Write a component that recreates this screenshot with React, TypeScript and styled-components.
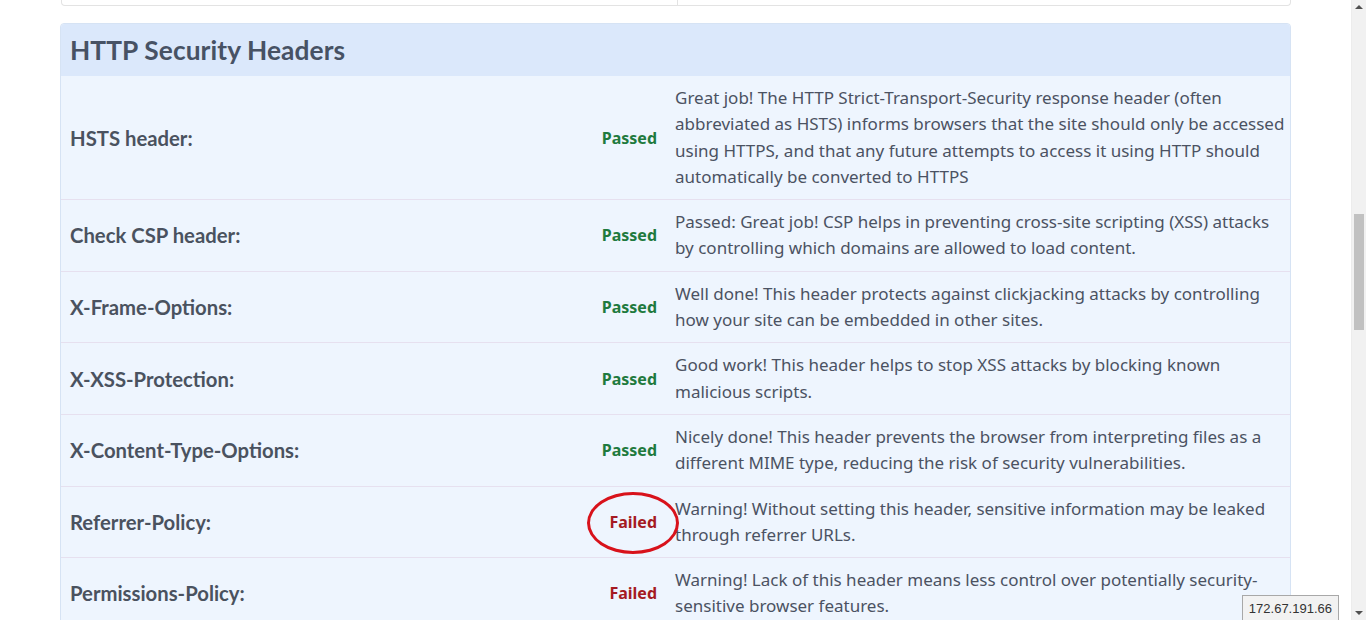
import styled, { createGlobalStyle } from 'styled-components'

const GlobalStyle = createGlobalStyle`
  html, body {
    margin: 0;
    padding: 0;
    background: #ffffff;
  }
  body {
    font-family: "Noto Sans", "Open Sans", sans-serif;
    color: #4a5160;
  }
`;

const Screen = styled.div`
  height: 100vh;
  display: flex;
  overflow: hidden;
`;

const Page = styled.main`
  flex: 1;
  min-width: 0;
  padding: 0 60px;
  overflow: hidden;
`;

const PrevCard = styled.div`
  height: 5px;
  display: grid;
  grid-template-columns: 615px 1fr;
  border: 1px solid #e3e3e3;
  border-top: none;
  border-radius: 0 0 4px 4px;
  margin: 0 0 17px 1px;
`;

const PrevCell = styled.div`
  & + & {
    border-left: 1px solid #e3e3e3;
  }
`;

const Card = styled.section`
  border: 1px solid #d6e3f4;
  border-radius: 4px;
  background: #eef5fe;
`;

const CardHeader = styled.header`
  background: #dbe8fb;
  height: 52px;
  display: flex;
  align-items: center;
  padding: 0 9px;
  border-radius: 4px 4px 0 0;
`;

const Title = styled.h2`
  margin: 0;
  font-family: Lato, "Noto Sans", sans-serif;
  font-weight: 700;
  font-size: 26.3px;
  color: #475264;
  letter-spacing: 0.1px;
`;

const Row = styled.div`
  display: grid;
  grid-template-columns: 1fr 150px 623px;
  align-items: center;
  & + & {
    border-top: 1px solid #e6e0ef;
  }
`;

const Label = styled.div`
  padding: 0 9px;
  font-family: Lato, "Noto Sans", sans-serif;
  font-weight: 700;
  font-size: 20.3px;
  color: #4a525f;
`;

const StatusCell = styled.div`
  position: relative;
  text-align: right;
  padding-right: 10px;
`;

const Status = styled.span<{ $ok: boolean }>`
  font-weight: 700;
  font-size: 16px;
  color: ${p => (p.$ok ? '#1f7a3e' : '#a51a22')};
`;

const Circle = styled.span`
  position: absolute;
  right: -12px;
  top: 50%;
  margin-top: -30px;
  width: 86px;
  height: 56px;
  border: 3px solid #d8121b;
  border-radius: 50%;
  pointer-events: none;
`;

const Desc = styled.div`
  padding: 9px 2px 9px 8px;
  font-size: 17px;
  line-height: 26.3px;
  color: #4b5262;
`;

const ScrollTrack = styled.div`
  width: 15px;
  flex-shrink: 0;
  background: #f1f1f1;
  border-left: 1px solid #ececec;
  display: flex;
  flex-direction: column;
  align-items: center;
  padding: 5px 0;
  box-sizing: border-box;
`;

const Arrow = styled.div<{ $down?: boolean }>`
  width: 0;
  height: 0;
  border-left: 4px solid transparent;
  border-right: 4px solid transparent;
  ${p => (p.$down ? 'border-top: 4px solid #505050;' : 'border-bottom: 4px solid #505050;')}
`;

const ThumbArea = styled.div`
  flex: 1;
  width: 100%;
  padding: 0 2px;
  box-sizing: border-box;
`;

const Thumb = styled.div`
  margin-top: 205px;
  height: 116px;
  background: #c1c1c1;
`;

const StatusTip = styled.div`
  position: fixed;
  right: 27px;
  bottom: 0;
  height: 24px;
  padding: 0 6px;
  display: flex;
  align-items: center;
  background: #f2f2f2;
  border: 1px solid #a8a8a8;
  border-bottom: none;
  font-family: "Liberation Sans", Arial, sans-serif;
  font-size: 13px;
  color: #333;
`;

type Check = { name: string; ok: boolean; text: string; mark?: boolean };

const checks: Check[] = [
  {
    name: 'HSTS header:',
    ok: true,
    text: 'Great job! The HTTP Strict-Transport-Security response header (often abbreviated as HSTS) informs browsers that the site should only be accessed using HTTPS, and that any future attempts to access it using HTTP should automatically be converted to HTTPS',
  },
  {
    name: 'Check CSP header:',
    ok: true,
    text: 'Passed: Great job! CSP helps in preventing cross-site scripting (XSS) attacks by controlling which domains are allowed to load content.',
  },
  {
    name: 'X-Frame-Options:',
    ok: true,
    text: 'Well done! This header protects against clickjacking attacks by controlling how your site can be embedded in other sites.',
  },
  {
    name: 'X-XSS-Protection:',
    ok: true,
    text: 'Good work! This header helps to stop XSS attacks by blocking known malicious scripts.',
  },
  {
    name: 'X-Content-Type-Options:',
    ok: true,
    text: 'Nicely done! This header prevents the browser from interpreting files as a different MIME type, reducing the risk of security vulnerabilities.',
  },
  {
    name: 'Referrer-Policy:',
    ok: false,
    mark: true,
    text: 'Warning! Without setting this header, sensitive information may be leaked through referrer URLs.',
  },
  {
    name: 'Permissions-Policy:',
    ok: false,
    text: 'Warning! Lack of this header means less control over potentially security-sensitive browser features.',
  },
];

export default function App() {
  return (
    <Screen>
      <GlobalStyle />
      <Page>
        <PrevCard>
          <PrevCell />
          <PrevCell />
        </PrevCard>
        <Card>
          <CardHeader>
            <Title>HTTP Security Headers</Title>
          </CardHeader>
          {checks.map(c => (
            <Row key={c.name}>
              <Label>{c.name}</Label>
              <StatusCell>
                <Status $ok={c.ok}>{c.ok ? 'Passed' : 'Failed'}</Status>
                {c.mark && <Circle />}
              </StatusCell>
              <Desc>{c.text}</Desc>
            </Row>
          ))}
        </Card>
      </Page>
      <ScrollTrack>
        <Arrow />
        <ThumbArea>
          <Thumb />
        </ThumbArea>
        <Arrow $down />
      </ScrollTrack>
      <StatusTip>172.67.191.66</StatusTip>
    </Screen>
  )
}
